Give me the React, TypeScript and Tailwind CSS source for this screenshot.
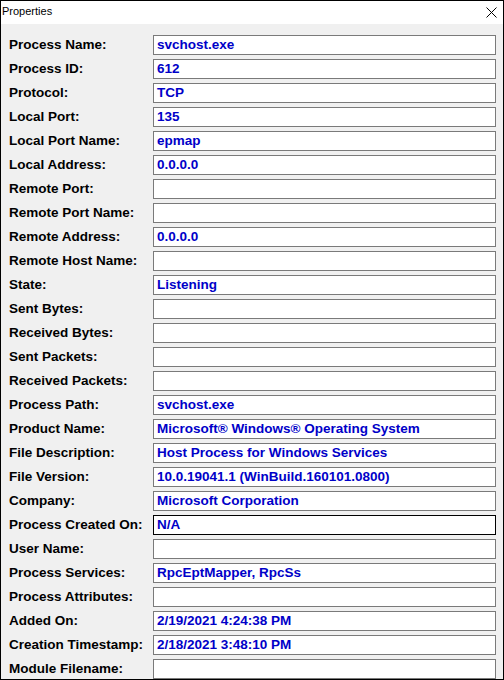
import React from 'react';

// Rows of the properties dialog; empty value = blank field
const rows: { label: string; value: string; focused?: boolean }[] = [
  { label: 'Process Name:', value: 'svchost.exe' },
  { label: 'Process ID:', value: '612' },
  { label: 'Protocol:', value: 'TCP' },
  { label: 'Local Port:', value: '135' },
  { label: 'Local Port Name:', value: 'epmap' },
  { label: 'Local Address:', value: '0.0.0.0' },
  { label: 'Remote Port:', value: '' },
  { label: 'Remote Port Name:', value: '' },
  { label: 'Remote Address:', value: '0.0.0.0' },
  { label: 'Remote Host Name:', value: '' },
  { label: 'State:', value: 'Listening' },
  { label: 'Sent Bytes:', value: '' },
  { label: 'Received Bytes:', value: '' },
  { label: 'Sent Packets:', value: '' },
  { label: 'Received Packets:', value: '' },
  { label: 'Process Path:', value: 'svchost.exe' },
  { label: 'Product Name:', value: 'Microsoft® Windows® Operating System' },
  { label: 'File Description:', value: 'Host Process for Windows Services' },
  { label: 'File Version:', value: '10.0.19041.1 (WinBuild.160101.0800)' },
  { label: 'Company:', value: 'Microsoft Corporation' },
  { label: 'Process Created On:', value: 'N/A', focused: true },
  { label: 'User Name:', value: '' },
  { label: 'Process Services:', value: 'RpcEptMapper, RpcSs' },
  { label: 'Process Attributes:', value: '' },
  { label: 'Added On:', value: '2/19/2021 4:24:38 PM' },
  { label: 'Creation Timestamp:', value: '2/18/2021 3:48:10 PM' },
  { label: 'Module Filename:', value: '' },
];

export default function App() {
  return (
    <div className="w-[504px] h-[680px] border border-black flex flex-col overflow-hidden bg-white font-['Liberation_Sans',Arial,sans-serif]">
      <div className="h-[23px] shrink-0 flex items-center justify-between bg-white pl-[1px] pr-[6px]">
        <span className="text-[11px] text-black leading-none pb-[2px]">Properties</span>
        <svg width="11" height="11" viewBox="0 0 11 11" className="mb-[1px]">
          <path d="M0.5 0.5 L10.5 10.5 M10.5 0.5 L0.5 10.5" stroke="#000" strokeWidth="1" fill="none" />
        </svg>
      </div>
      <div className="flex-1 bg-[#f0f0f0] pt-[11px] pl-[8px] pr-[7px] flex flex-col gap-[4px] overflow-hidden">
        {rows.map((row) => (
          <div key={row.label} className="flex items-center h-[20px] shrink-0">
            <label className="w-[144px] shrink-0 text-[13.5px] font-bold text-black leading-none whitespace-nowrap">
              {row.label}
            </label>
            <div
              className={
                row.focused
                  ? 'flex-1 h-[20px] bg-white border border-black flex items-center pl-[3px]'
                  : 'flex-1 h-[20px] bg-white border border-[#7a7a7a] flex items-center pl-[3px]'
              }
            >
              <span className="text-[13.5px] font-bold text-[#0000c8] leading-none whitespace-nowrap">
                {row.value}
              </span>
            </div>
          </div>
        ))}
      </div>
    </div>
  );
}
